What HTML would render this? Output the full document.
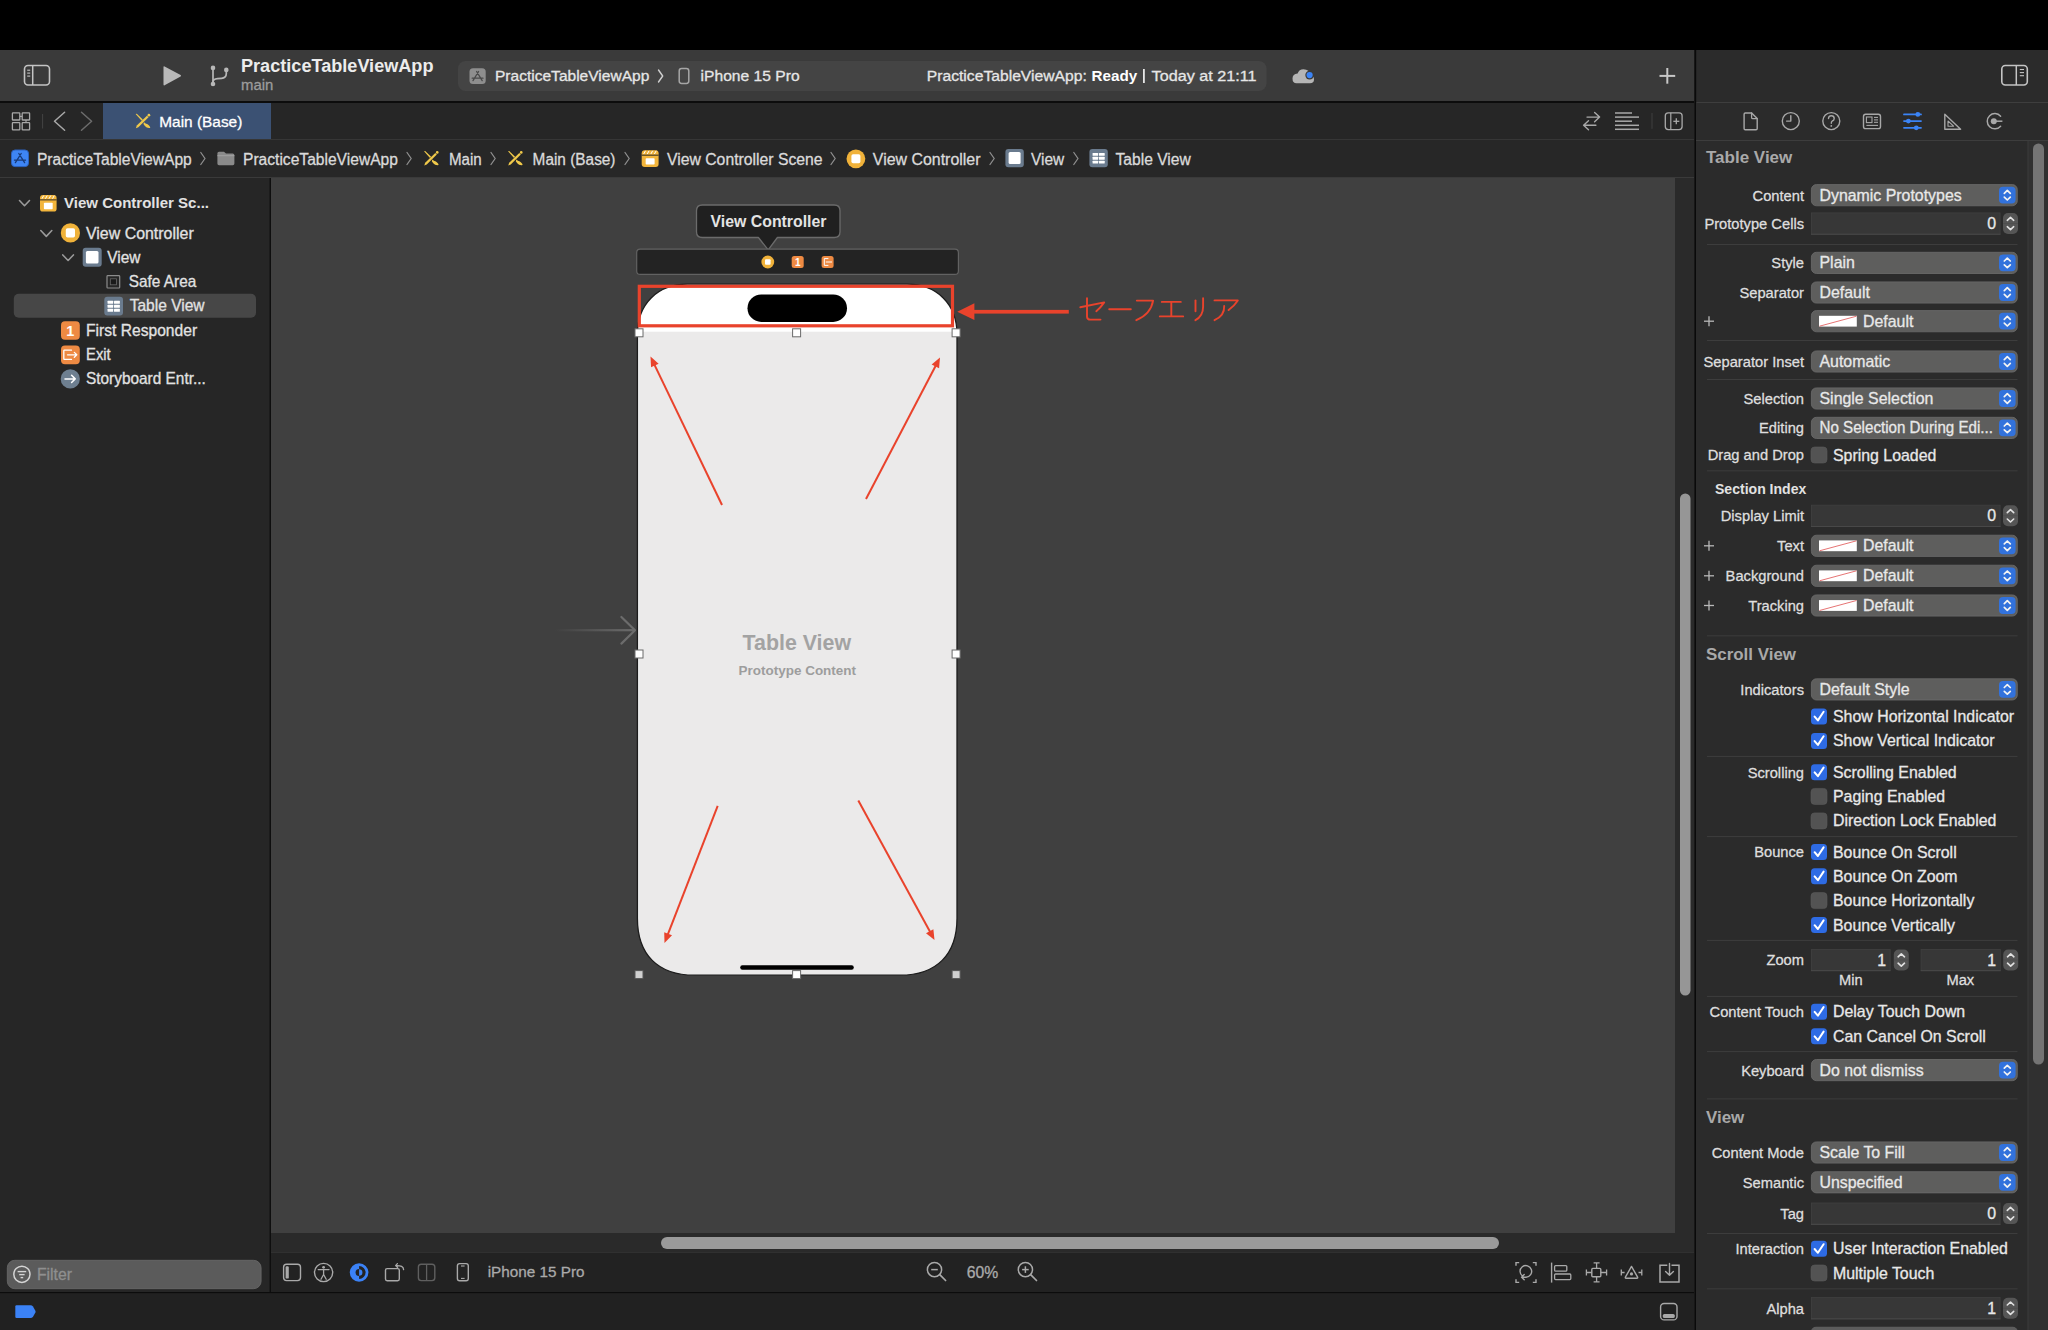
<!DOCTYPE html><html><head><meta charset="utf-8"><style>
html,body{margin:0;padding:0;background:#2b2b2b;width:2048px;height:1330px;overflow:hidden}
svg{position:absolute;left:0;top:0;display:block}
text{font-family:"Liberation Sans",sans-serif}
</style></head><body>
<svg width="2048" height="1330" viewBox="0 0 2048 1330">
<rect x="0" y="0" width="2048" height="1330" fill="#2b2b2b" />
<rect x="0" y="0" width="2048" height="50" fill="#000000" />
<rect x="0" y="50" width="1694" height="51" fill="#3a3a3a" />
<rect x="0" y="101" width="1694" height="2" fill="#0c0c0c" />
<rect x="1696" y="50" width="352" height="52" fill="#2b2b2b" />
<rect x="1696" y="102" width="352" height="1" fill="#3e3e3e" />
<rect x="0" y="103" width="1694" height="36" fill="#262626" />
<rect x="103" y="103" width="168" height="36" fill="#3b5173" />
<rect x="0" y="139" width="1694" height="1.2" fill="#363636" />
<rect x="0" y="140" width="1694" height="37" fill="#272727" />
<rect x="0" y="177" width="1694" height="1.2" fill="#3a3a3a" />
<rect x="0" y="178" width="270" height="1114" fill="#262626" />
<rect x="269.6" y="178" width="1.5" height="1114" fill="#0e0e0e" />
<rect x="271" y="178" width="1404" height="1055" fill="#404040" />
<rect x="1675" y="178" width="19" height="1055" fill="#2a2a2a" />
<rect x="1680" y="493.5" width="10.5" height="502" fill="#969696" rx="5.2" />
<rect x="271" y="1233" width="1423" height="19" fill="#2a2a2a" />
<rect x="661" y="1237" width="838" height="12" fill="#9a9a9a" rx="6" />
<rect x="271" y="1252" width="1423" height="40" fill="#222222" />
<rect x="271" y="1252" width="1423" height="1" fill="#303030" />
<rect x="0" y="1292" width="1694" height="1.5" fill="#0c0c0c" />
<rect x="0" y="1293.5" width="1694" height="37" fill="#212121" />
<rect x="1694.4" y="50" width="1.8" height="1280" fill="#0a0a0a" />
<rect x="1696" y="103" width="352" height="1227" fill="#2b2b2b" />
<rect x="1696" y="140" width="352" height="1" fill="#3d3d3d" />
<rect x="2027.5" y="141" width="20.5" height="1189" fill="#303030" />
<rect x="2027.5" y="141" width="1" height="1189" fill="#3a3a3a" />
<rect x="2033" y="143.5" width="11" height="921" fill="#747474" rx="5.5" />
<rect x="24.5" y="65.5" width="25" height="19.5" fill="none" rx="3.5" stroke="#c4c4c4" stroke-width="1.6" />
<line x1="32.7" y1="65.5" x2="32.7" y2="85" stroke="#c4c4c4" stroke-width="1.5" stroke-linecap="butt" />
<line x1="27.2" y1="70.2" x2="30.2" y2="70.2" stroke="#c4c4c4" stroke-width="1.1" stroke-linecap="butt" />
<line x1="27.2" y1="73.1" x2="30.2" y2="73.1" stroke="#c4c4c4" stroke-width="1.1" stroke-linecap="butt" />
<line x1="27.2" y1="76.1" x2="30.2" y2="76.1" stroke="#c4c4c4" stroke-width="1.1" stroke-linecap="butt" />
<path d="M163.5 67 L163.5 84.6 Q163.5 85.8 164.6 85.2 L180.6 76.5 Q181.5 75.8 180.6 75.1 L164.6 66.4 Q163.5 65.8 163.5 67 Z" fill="#b9b9b9" />
<circle cx="213" cy="67.9" r="2.3" fill="#b8b8b8"/>
<circle cx="213" cy="84" r="2.3" fill="#b8b8b8"/>
<circle cx="226.3" cy="69.9" r="2.3" fill="#b8b8b8"/>
<line x1="213" y1="67.9" x2="213" y2="84" stroke="#b8b8b8" stroke-width="1.7" stroke-linecap="butt" />
<path d="M226.3 69.9 L226.3 73.5 Q226.3 78 221.5 78.3 L217.5 78.6 Q213 79 213 82" fill="none" stroke="#b8b8b8" stroke-width="1.7" stroke-linecap="round" stroke-linejoin="round" />
<text x="241" y="71.6" font-size="18" fill="#ececec" font-weight="700" textLength="192.5" lengthAdjust="spacingAndGlyphs" >PracticeTableViewApp</text>
<text x="241" y="90.3" font-size="14.9" fill="#9c9c9c" textLength="32.3" lengthAdjust="spacingAndGlyphs" stroke="#9c9c9c" stroke-width="0.3" >main</text>
<rect x="458" y="61" width="808.5" height="30" fill="#444444" rx="7.5" />
<rect x="469.5" y="68.3" width="16.2" height="15.6" fill="#8e8e8e" rx="3.5" />
<path d="M476.6 71.5 L482.2 80.6 M478.6 71.5 L473 80.6 M472.2 78.2 L483 78.2" fill="none" stroke="#4a4a4a" stroke-width="1.3" stroke-linecap="round" stroke-linejoin="round" />
<text x="495" y="81" font-size="15.5" fill="#e6e6e6" textLength="154.3" lengthAdjust="spacingAndGlyphs" stroke="#e6e6e6" stroke-width="0.3" >PracticeTableViewApp</text>
<path d="M658.5 70.0 L662.7 76 L658.5 82.0" fill="none" stroke="#cfcfcf" stroke-width="1.4" stroke-linecap="round" stroke-linejoin="round" />
<rect x="679.2" y="68.6" width="9.6" height="14.9" fill="none" rx="2.4" stroke="#a6a6a6" stroke-width="1.5" />
<text x="700.6" y="81" font-size="15.5" fill="#e6e6e6" textLength="99" lengthAdjust="spacingAndGlyphs" stroke="#e6e6e6" stroke-width="0.3" >iPhone 15 Pro</text>
<text x="926.8" y="81.1" font-size="15.5" fill="#e6e6e6" textLength="160" lengthAdjust="spacingAndGlyphs" stroke="#e6e6e6" stroke-width="0.3" >PracticeTableViewApp:</text>
<text x="1091.5" y="81.1" font-size="15.5" fill="#ffffff" font-weight="700" textLength="45.7" lengthAdjust="spacingAndGlyphs" >Ready</text>
<rect x="1143" y="69" width="1.8" height="14" fill="#e6e6e6" />
<text x="1151.6" y="81.1" font-size="15.5" fill="#e6e6e6" textLength="105" lengthAdjust="spacingAndGlyphs" stroke="#e6e6e6" stroke-width="0.3" >Today at 21:11</text>
<path d="M1296.5 83.3 L1310 83.3 Q1314 83.3 1314 79.5 Q1314 76 1310.5 75.6 Q1309.5 69.2 1303.5 69.2 Q1299 69.2 1297.6 73.5 Q1292.5 74 1292.5 78.5 Q1292.5 83.3 1296.5 83.3 Z" fill="#b5b5b5" />
<circle cx="1309.6" cy="75.1" r="4.3" fill="#3a3a3a"/>
<circle cx="1309.6" cy="75.1" r="3.1" fill="#3b84f6"/>
<line x1="1667.3" y1="68" x2="1667.3" y2="83.7" stroke="#c8c8c8" stroke-width="2" stroke-linecap="butt" />
<line x1="1659.5" y1="75.9" x2="1675.2" y2="75.9" stroke="#c8c8c8" stroke-width="2" stroke-linecap="butt" />
<rect x="2001.8" y="65.5" width="25.5" height="19.5" fill="none" rx="3.5" stroke="#c4c4c4" stroke-width="1.6" />
<line x1="2016.3" y1="65.5" x2="2016.3" y2="85" stroke="#c4c4c4" stroke-width="1.5" stroke-linecap="butt" />
<line x1="2019.8" y1="69.5" x2="2024" y2="69.5" stroke="#c4c4c4" stroke-width="1.1" stroke-linecap="butt" />
<line x1="2019.8" y1="72.6" x2="2024" y2="72.6" stroke="#c4c4c4" stroke-width="1.1" stroke-linecap="butt" />
<line x1="2019.8" y1="75.7" x2="2024" y2="75.7" stroke="#c4c4c4" stroke-width="1.1" stroke-linecap="butt" />
<rect x="12.4" y="112.9" width="7.4" height="7.1" fill="none" rx="0.6" stroke="#a9a9a9" stroke-width="1.3" />
<rect x="22.2" y="112.9" width="7.4" height="7.1" fill="none" rx="0.6" stroke="#a9a9a9" stroke-width="1.3" />
<rect x="12.4" y="122.7" width="7.4" height="7.1" fill="none" rx="0.6" stroke="#a9a9a9" stroke-width="1.3" />
<rect x="22.2" y="122.7" width="7.4" height="7.1" fill="none" rx="0.6" stroke="#a9a9a9" stroke-width="1.3" />
<line x1="19.8" y1="116.4" x2="22.2" y2="116.4" stroke="#a9a9a9" stroke-width="1.1" stroke-linecap="butt" />
<line x1="26" y1="120" x2="26" y2="122.7" stroke="#a9a9a9" stroke-width="1.1" stroke-linecap="butt" />
<line x1="42.6" y1="114" x2="42.6" y2="128.5" stroke="#444444" stroke-width="1" stroke-linecap="butt" />
<path d="M64.6 112.3 L54.5 121.3 L64.6 130.3" fill="none" stroke="#a8a8a8" stroke-width="1.5" stroke-linecap="round" stroke-linejoin="round" />
<path d="M81.5 112.3 L91.6 121.3 L81.5 130.3" fill="none" stroke="#6c6c6c" stroke-width="1.5" stroke-linecap="round" stroke-linejoin="round" />
<path d="M135.60 114.00 L136.78 113.71 L142.75 119.49 L141.68 120.66 Z" fill="#f0c94a" />
<path d="M144.03 122.13 L145.60 123.41 Q150.10 124.98 150.30 127.92 Q146.87 128.50 144.91 125.96 L143.44 124.00 Z" fill="#f0c94a" />
<path d="M135.89 128.21 L136.78 125.56 L146.97 115.76 L148.54 117.33 L138.34 127.33 Z" fill="#f0c94a" />
<circle cx="148.928" cy="115.176" r="1.3719999999999999" fill="#f0c94a"/>
<text x="159.3" y="126.9" font-size="15.4" fill="#ffffff" textLength="83" lengthAdjust="spacingAndGlyphs" stroke="#ffffff" stroke-width="0.3" >Main (Base)</text>
<path d="M1587 117.1 L1599.6 117.1 M1594.6 112.4 L1599.6 117.1 L1594.6 121.7" fill="none" stroke="#a9a9a9" stroke-width="1.4" stroke-linecap="round" stroke-linejoin="round" />
<path d="M1595.9 125.3 L1583.6 125.3 M1588.5 120.8 L1583.6 125.3 L1588.5 129.8" fill="none" stroke="#a9a9a9" stroke-width="1.4" stroke-linecap="round" stroke-linejoin="round" />
<line x1="1615" y1="113" x2="1632" y2="113" stroke="#a9a9a9" stroke-width="1.5" stroke-linecap="butt" />
<line x1="1615" y1="117.1" x2="1639" y2="117.1" stroke="#a9a9a9" stroke-width="1.5" stroke-linecap="butt" />
<line x1="1615" y1="121.2" x2="1632" y2="121.2" stroke="#a9a9a9" stroke-width="1.5" stroke-linecap="butt" />
<line x1="1615" y1="125.3" x2="1639" y2="125.3" stroke="#a9a9a9" stroke-width="1.5" stroke-linecap="butt" />
<line x1="1615" y1="129.3" x2="1639" y2="129.3" stroke="#a9a9a9" stroke-width="1.5" stroke-linecap="butt" />
<line x1="1652" y1="113" x2="1652" y2="128.8" stroke="#3f3f3f" stroke-width="1" stroke-linecap="butt" />
<rect x="1665.3" y="112.8" width="16.8" height="16.8" fill="none" rx="3" stroke="#a9a9a9" stroke-width="1.3" />
<line x1="1670.8" y1="112.8" x2="1670.8" y2="129.6" stroke="#a9a9a9" stroke-width="1.2" stroke-linecap="butt" />
<line x1="1676.3" y1="118.3" x2="1676.3" y2="124.3" stroke="#a9a9a9" stroke-width="1.3" stroke-linecap="butt" />
<line x1="1673.3" y1="121.3" x2="1679.3" y2="121.3" stroke="#a9a9a9" stroke-width="1.3" stroke-linecap="butt" />
<rect x="11.5" y="150" width="17" height="16.6" fill="#3e85f4" rx="3.5" stroke="#2c63c0" stroke-width="1" />
<path d="M18.8 153.5 L24.6 162.6 M21.2 153.5 L15.4 162.6 M14.5 160.2 L25.5 160.2" fill="none" stroke="#173a78" stroke-width="1.3" stroke-linecap="round" stroke-linejoin="round" />
<text x="36.9" y="165" font-size="15.6" fill="#dadada" textLength="154.9" lengthAdjust="spacingAndGlyphs" stroke="#dadada" stroke-width="0.3" >PracticeTableViewApp</text>
<path d="M200.8 152.5 L205.0 158.5 L200.8 164.5" fill="none" stroke="#8f8f8f" stroke-width="1.3" stroke-linecap="round" stroke-linejoin="round" />
<path d="M217.4 153.3 Q217.4 151.7 219 151.7 L224 151.7 L226 153.6 L232.8 153.6 Q234.4 153.6 234.4 155.2 L234.4 163.6 Q234.4 165.2 232.8 165.2 L219 165.2 Q217.4 165.2 217.4 163.6 Z" fill="#8a8a8a" />
<rect x="217.4" y="155.2" width="17" height="1" fill="#a2a2a2" />
<text x="243" y="165" font-size="15.6" fill="#dadada" textLength="154.9" lengthAdjust="spacingAndGlyphs" stroke="#dadada" stroke-width="0.3" >PracticeTableViewApp</text>
<path d="M407 152.5 L411.2 158.5 L407 164.5" fill="none" stroke="#8f8f8f" stroke-width="1.3" stroke-linecap="round" stroke-linejoin="round" />
<path d="M424.00 151.30 L425.17 151.01 L431.11 156.75 L430.03 157.92 Z" fill="#f0c94a" />
<path d="M432.37 159.38 L433.93 160.64 Q438.41 162.20 438.60 165.12 Q435.19 165.71 433.25 163.17 L431.79 161.23 Z" fill="#f0c94a" />
<path d="M424.29 165.41 L425.17 162.79 L435.29 153.05 L436.85 154.61 L426.73 164.54 Z" fill="#f0c94a" />
<circle cx="437.2373333333333" cy="152.46800000000002" r="1.3626666666666665" fill="#f0c94a"/>
<text x="449" y="165" font-size="15.6" fill="#dadada" textLength="32.8" lengthAdjust="spacingAndGlyphs" stroke="#dadada" stroke-width="0.3" >Main</text>
<path d="M491 152.5 L495.2 158.5 L491 164.5" fill="none" stroke="#8f8f8f" stroke-width="1.3" stroke-linecap="round" stroke-linejoin="round" />
<path d="M508.00 151.30 L509.17 151.01 L515.11 156.75 L514.03 157.92 Z" fill="#f0c94a" />
<path d="M516.37 159.38 L517.93 160.64 Q522.41 162.20 522.60 165.12 Q519.19 165.71 517.25 163.17 L515.79 161.23 Z" fill="#f0c94a" />
<path d="M508.29 165.41 L509.17 162.79 L519.29 153.05 L520.85 154.61 L510.73 164.54 Z" fill="#f0c94a" />
<circle cx="521.2373333333334" cy="152.46800000000002" r="1.3626666666666665" fill="#f0c94a"/>
<text x="532.6" y="165" font-size="15.6" fill="#dadada" textLength="82.9" lengthAdjust="spacingAndGlyphs" stroke="#dadada" stroke-width="0.3" >Main (Base)</text>
<path d="M625 152.5 L629.2 158.5 L625 164.5" fill="none" stroke="#8f8f8f" stroke-width="1.3" stroke-linecap="round" stroke-linejoin="round" />
<rect x="641.7" y="150.2" width="16.9" height="16.9" fill="#f2b53c" rx="2.98235294117647" />
<path d="M643.6882352941177 153.97764705882352 L645.4776470588235 150.79647058823528" fill="none" stroke="#ffffff" stroke-width="0.9941176470588234" stroke-linecap="butt" stroke-linejoin="round" />
<path d="M647.2670588235295 153.97764705882352 L649.0564705882354 150.79647058823528" fill="none" stroke="#ffffff" stroke-width="0.9941176470588234" stroke-linecap="butt" stroke-linejoin="round" />
<path d="M650.8458823529412 153.97764705882352 L652.635294117647 150.79647058823528" fill="none" stroke="#ffffff" stroke-width="0.9941176470588234" stroke-linecap="butt" stroke-linejoin="round" />
<path d="M654.424705882353 153.97764705882352 L656.2141176470589 150.79647058823528" fill="none" stroke="#ffffff" stroke-width="0.9941176470588234" stroke-linecap="butt" stroke-linejoin="round" />
<rect x="641.7" y="154.6735294117647" width="16.9" height="0.9941176470588234" fill="#2e2a24" />
<rect x="645.6764705882354" y="158.15294117647056" width="8.94705882352941" height="6.461764705882352" fill="#ffffff" rx="0.7952941176470588" />
<text x="667" y="165" font-size="15.6" fill="#dadada" textLength="155.6" lengthAdjust="spacingAndGlyphs" stroke="#dadada" stroke-width="0.3" >View Controller Scene</text>
<path d="M831 152.5 L835.2 158.5 L831 164.5" fill="none" stroke="#8f8f8f" stroke-width="1.3" stroke-linecap="round" stroke-linejoin="round" />
<circle cx="855.9" cy="158.8" r="9.4" fill="#f0b23a"/>
<rect x="851.388" y="154.288" width="9.024" height="9.024" fill="#ffffff" rx="1.692" />
<text x="872.8" y="165" font-size="15.6" fill="#dadada" textLength="107.7" lengthAdjust="spacingAndGlyphs" stroke="#dadada" stroke-width="0.3" >View Controller</text>
<path d="M990 152.5 L994.2 158.5 L990 164.5" fill="none" stroke="#8f8f8f" stroke-width="1.3" stroke-linecap="round" stroke-linejoin="round" />
<rect x="1005.4" y="148.9" width="18.4" height="18.4" fill="#6a7b8e" rx="3" />
<rect x="1008.6" y="152.1" width="11.999999999999998" height="11.999999999999998" fill="#ffffff" rx="1.5" />
<text x="1031" y="165" font-size="15.6" fill="#dadada" textLength="33.2" lengthAdjust="spacingAndGlyphs" stroke="#dadada" stroke-width="0.3" >View</text>
<path d="M1073.8 152.5 L1078.0 158.5 L1073.8 164.5" fill="none" stroke="#8f8f8f" stroke-width="1.3" stroke-linecap="round" stroke-linejoin="round" />
<rect x="1089.4" y="148.9" width="18.4" height="18.4" fill="#6a7b8e" rx="3" />
<rect x="1092.5827027027028" y="152.8783783783784" width="5.569729729729729" height="2.884324324324324" fill="#ffffff" rx="0.5" />
<rect x="1098.9481081081083" y="152.8783783783784" width="5.768648648648648" height="2.884324324324324" fill="#ffffff" rx="0.5" />
<rect x="1092.5827027027028" y="156.7572972972973" width="5.569729729729729" height="2.884324324324324" fill="#ffffff" rx="0.5" />
<rect x="1098.9481081081083" y="156.7572972972973" width="5.768648648648648" height="2.884324324324324" fill="#ffffff" rx="0.5" />
<rect x="1092.5827027027028" y="160.6362162162162" width="5.569729729729729" height="2.884324324324324" fill="#ffffff" rx="0.5" />
<rect x="1098.9481081081083" y="160.6362162162162" width="5.768648648648648" height="2.884324324324324" fill="#ffffff" rx="0.5" />
<text x="1115.5" y="165" font-size="15.6" fill="#dadada" textLength="75.2" lengthAdjust="spacingAndGlyphs" stroke="#dadada" stroke-width="0.3" >Table View</text>
<path d="M19.5 200.5 L24.5 205.75 L29.5 200.5" fill="none" stroke="#9a9a9a" stroke-width="1.6" stroke-linecap="round" stroke-linejoin="round" />
<rect x="40" y="195" width="16.6" height="16.6" fill="#f2b53c" rx="2.9294117647058826" />
<path d="M41.95294117647059 198.71058823529413 L43.71058823529412 195.58588235294118" fill="none" stroke="#ffffff" stroke-width="0.9764705882352942" stroke-linecap="butt" stroke-linejoin="round" />
<path d="M45.46823529411765 198.71058823529413 L47.22588235294118 195.58588235294118" fill="none" stroke="#ffffff" stroke-width="0.9764705882352942" stroke-linecap="butt" stroke-linejoin="round" />
<path d="M48.98352941176471 198.71058823529413 L50.741176470588236 195.58588235294118" fill="none" stroke="#ffffff" stroke-width="0.9764705882352942" stroke-linecap="butt" stroke-linejoin="round" />
<path d="M52.498823529411766 198.71058823529413 L54.256470588235295 195.58588235294118" fill="none" stroke="#ffffff" stroke-width="0.9764705882352942" stroke-linecap="butt" stroke-linejoin="round" />
<rect x="40" y="199.39411764705883" width="16.6" height="0.9764705882352942" fill="#2e2a24" />
<rect x="43.90588235294118" y="202.81176470588235" width="8.788235294117648" height="6.347058823529412" fill="#ffffff" rx="0.7811764705882354" />
<text x="64" y="208.4" font-size="15" fill="#e2e2e2" font-weight="700" textLength="145" lengthAdjust="spacingAndGlyphs" >View Controller Sc...</text>
<path d="M40.8 230.55 L46.3 236.32500000000002 L51.8 230.55" fill="none" stroke="#9a9a9a" stroke-width="1.6" stroke-linecap="round" stroke-linejoin="round" />
<circle cx="70.4" cy="232.9" r="9.6" fill="#f0b23a"/>
<rect x="65.792" y="228.292" width="9.216" height="9.216" fill="#ffffff" rx="1.728" />
<text x="86" y="238.6" font-size="15.9" fill="#e2e2e2" textLength="107.7" lengthAdjust="spacingAndGlyphs" stroke="#e2e2e2" stroke-width="0.3" >View Controller</text>
<path d="M62.8 254.95000000000002 L68.1 260.51500000000004 L73.4 254.95000000000002" fill="none" stroke="#9a9a9a" stroke-width="1.6" stroke-linecap="round" stroke-linejoin="round" />
<rect x="82.7" y="247.8" width="19" height="19" fill="#6a7b8e" rx="3" />
<rect x="85.9" y="251.0" width="12.6" height="12.6" fill="#ffffff" rx="1.5" />
<text x="107.2" y="262.9" font-size="15.9" fill="#e2e2e2" textLength="33.2" lengthAdjust="spacingAndGlyphs" stroke="#e2e2e2" stroke-width="0.3" >View</text>
<rect x="107" y="275.6" width="12.7" height="12.4" fill="none" rx="0.8" stroke="#8c8c8c" stroke-width="1.2" />
<rect x="110.3" y="278.8" width="6.2" height="6.0" fill="#1a1a1a" stroke="#6a6a6a" stroke-width="0.8" />
<text x="128.8" y="287.2" font-size="15.9" fill="#e2e2e2" textLength="67.5" lengthAdjust="spacingAndGlyphs" stroke="#e2e2e2" stroke-width="0.3" >Safe Area</text>
<rect x="13.8" y="293.8" width="242.2" height="24" fill="#474747" rx="5" />
<rect x="104.3" y="296.8" width="18.7" height="18.7" fill="#6a7b8e" rx="3" />
<rect x="107.5345945945946" y="300.84324324324325" width="5.66054054054054" height="2.931351351351351" fill="#ffffff" rx="0.5" />
<rect x="114.00378378378377" y="300.84324324324325" width="5.862702702702702" height="2.931351351351351" fill="#ffffff" rx="0.5" />
<rect x="107.5345945945946" y="304.7854054054054" width="5.66054054054054" height="2.931351351351351" fill="#ffffff" rx="0.5" />
<rect x="114.00378378378377" y="304.7854054054054" width="5.862702702702702" height="2.931351351351351" fill="#ffffff" rx="0.5" />
<rect x="107.5345945945946" y="308.7275675675676" width="5.66054054054054" height="2.931351351351351" fill="#ffffff" rx="0.5" />
<rect x="114.00378378378377" y="308.7275675675676" width="5.862702702702702" height="2.931351351351351" fill="#ffffff" rx="0.5" />
<text x="129.7" y="311.4" font-size="15.9" fill="#e2e2e2" textLength="74.9" lengthAdjust="spacingAndGlyphs" stroke="#e2e2e2" stroke-width="0.3" >Table View</text>
<rect x="61" y="321.2" width="18.8" height="18.6" fill="#ee8a43" rx="4" />
<text x="70.4" y="335.8" font-size="14.5" fill="#ffffff" font-weight="700" text-anchor="middle" >1</text>
<text x="86" y="336" font-size="15.9" fill="#e2e2e2" textLength="111.1" lengthAdjust="spacingAndGlyphs" stroke="#e2e2e2" stroke-width="0.3" >First Responder</text>
<rect x="61" y="345.4" width="18.8" height="18.8" fill="#ee8a43" rx="4" />
<path d="M71.5 350.2 L64.4 350.2 Q63.8 350.2 63.8 350.8 L63.8 358.8 Q63.8 359.4 64.4 359.4 L71.5 359.4" fill="none" stroke="#ffffff" stroke-width="1.3" stroke-linecap="round" stroke-linejoin="round" />
<path d="M67.5 354.8 L76.8 354.8 M74.3 352.4 L76.8 354.8 L74.3 357.2" fill="none" stroke="#ffffff" stroke-width="1.3" stroke-linecap="round" stroke-linejoin="round" />
<text x="86" y="360.2" font-size="15.9" fill="#e2e2e2" textLength="24.7" lengthAdjust="spacingAndGlyphs" stroke="#e2e2e2" stroke-width="0.3" >Exit</text>
<circle cx="70.3" cy="378.9" r="9.6" fill="#6e7f90"/>
<path d="M65 378.9 L75.2 378.9 M71.6 375.3 L75.2 378.9 L71.6 382.5" fill="none" stroke="#ffffff" stroke-width="1.5" stroke-linecap="round" stroke-linejoin="round" />
<text x="86" y="384.4" font-size="15.9" fill="#e2e2e2" textLength="119.8" lengthAdjust="spacingAndGlyphs" stroke="#e2e2e2" stroke-width="0.3" >Storyboard Entr...</text>
<rect x="7.3" y="1260.3" width="253.8" height="28.4" fill="#5b5b5b" rx="7.5" stroke="#6b6b6b" stroke-width="0.8" />
<circle cx="21.9" cy="1274.3" r="8.1" fill="none" stroke="#d4d4d4" stroke-width="1.5"/>
<line x1="17.6" y1="1271.6" x2="26.2" y2="1271.6" stroke="#d4d4d4" stroke-width="1.4" stroke-linecap="butt" />
<line x1="19.2" y1="1274.6" x2="24.6" y2="1274.6" stroke="#d4d4d4" stroke-width="1.4" stroke-linecap="butt" />
<line x1="20.6" y1="1277.6" x2="23.2" y2="1277.6" stroke="#d4d4d4" stroke-width="1.4" stroke-linecap="butt" />
<text x="36.9" y="1280.3" font-size="15.9" fill="#8f8f8f" textLength="35" lengthAdjust="spacingAndGlyphs" stroke="#8f8f8f" stroke-width="0.3" >Filter</text>
<path d="M16.5 1305.3 L30.5 1305.3 Q32 1305.3 33 1306.5 L35.4 1310.8 Q35.8 1311.6 35.4 1312.4 L33 1316.7 Q32 1317.9 30.5 1317.9 L16.5 1317.9 Q15.3 1317.9 15.3 1316.7 L15.3 1306.5 Q15.3 1305.3 16.5 1305.3 Z" fill="#3b82f6" />
<rect x="1660.6" y="1303.5" width="16.4" height="16.4" fill="none" rx="3.5" stroke="#a8a8a8" stroke-width="1.4" />
<rect x="1662.8" y="1313.9" width="12" height="4.1" fill="#a8a8a8" rx="1.6" />
<rect x="283.6" y="1264.2" width="16.9" height="16.4" fill="none" rx="3" stroke="#a9a9a9" stroke-width="1.4" />
<rect x="285.6" y="1266.2" width="3.2" height="12.4" fill="#a9a9a9" rx="1.2" />
<circle cx="323.6" cy="1272.5" r="9.1" fill="none" stroke="#a9a9a9" stroke-width="1.4"/>
<circle cx="323.6" cy="1267.3" r="1.4" fill="#a9a9a9"/>
<path d="M318.2 1269.6 L329 1269.6 M323.6 1269.6 L323.6 1274.5 M323.6 1274.5 L321 1279.3 M323.6 1274.5 L326.2 1279.3" fill="none" stroke="#a9a9a9" stroke-width="1.3" stroke-linecap="round" stroke-linejoin="round" />
<circle cx="359.1" cy="1272.5" r="9.3" fill="#3b82f6"/>
<path d="M359.1 1266 A6.5 6.5 0 0 1 359.1 1279 Z" fill="#232323" />
<path d="M359.1 1269 A3.5 3.5 0 0 0 359.1 1276 Z" fill="#232323" />
<path d="M359.1 1269.2 A3.3 3.3 0 0 1 359.1 1275.8 Z" fill="#3b82f6" />
<rect x="385.5" y="1268.6" width="13.8" height="12.1" fill="none" rx="1.6" stroke="#a9a9a9" stroke-width="1.4" />
<path d="M397.4 1263.6 L395.6 1265.6 L397.6 1267.4 M396 1265.6 Q403.4 1265.2 403.6 1269.6" fill="none" stroke="#a9a9a9" stroke-width="1.3" stroke-linecap="round" stroke-linejoin="round" />
<rect x="418.4" y="1264.2" width="16.4" height="16.4" fill="none" rx="2.8" stroke="#5f5f5f" stroke-width="1.4" />
<line x1="426.6" y1="1264.2" x2="426.6" y2="1280.6" stroke="#5f5f5f" stroke-width="1.3" stroke-linecap="butt" />
<rect x="457.4" y="1263.6" width="10.9" height="17.2" fill="none" rx="2.2" stroke="#a9a9a9" stroke-width="1.4" />
<line x1="461" y1="1266" x2="464.6" y2="1266" stroke="#a9a9a9" stroke-width="1.1" stroke-linecap="butt" />
<line x1="461" y1="1278.4" x2="464.6" y2="1278.4" stroke="#a9a9a9" stroke-width="1.1" stroke-linecap="butt" />
<text x="487.7" y="1277.3" font-size="15.5" fill="#aaaaaa" textLength="96.8" lengthAdjust="spacingAndGlyphs" stroke="#aaaaaa" stroke-width="0.3" >iPhone 15 Pro</text>
<circle cx="934.5" cy="1269.6" r="7.1" fill="none" stroke="#a9a9a9" stroke-width="1.5"/>
<line x1="940" y1="1274.9" x2="945.6" y2="1280.5" stroke="#a9a9a9" stroke-width="1.7" stroke-linecap="round" />
<line x1="931.2" y1="1269.6" x2="937.8" y2="1269.6" stroke="#a9a9a9" stroke-width="1.5" stroke-linecap="butt" />
<text x="966.7" y="1278.2" font-size="15.6" fill="#aaaaaa" textLength="31.5" lengthAdjust="spacingAndGlyphs" stroke="#aaaaaa" stroke-width="0.3" >60%</text>
<circle cx="1025.4" cy="1269.6" r="7.1" fill="none" stroke="#a9a9a9" stroke-width="1.5"/>
<line x1="1030.9" y1="1274.9" x2="1036.5" y2="1280.5" stroke="#a9a9a9" stroke-width="1.7" stroke-linecap="round" />
<line x1="1022.1" y1="1269.6" x2="1028.7" y2="1269.6" stroke="#a9a9a9" stroke-width="1.5" stroke-linecap="butt" />
<line x1="1025.4" y1="1266.3" x2="1025.4" y2="1272.9" stroke="#a9a9a9" stroke-width="1.5" stroke-linecap="butt" />
<path d="M1516 1265.8 L1516 1262.6 L1519.2 1262.6 M1532.8 1262.6 L1536 1262.6 L1536 1265.8 M1536 1279.2 L1536 1282.4 L1532.8 1282.4 M1519.2 1282.4 L1516 1282.4 L1516 1279.2" fill="none" stroke="#a9a9a9" stroke-width="1.4" stroke-linecap="butt" stroke-linejoin="miter" />
<path d="M1522.6 1276.2 A5.8 5.8 0 1 1 1526 1277.2 L1522 1277.2 M1524.2 1274.6 L1521.6 1277.2 L1524.2 1279.8" fill="none" stroke="#a9a9a9" stroke-width="1.4" stroke-linecap="round" stroke-linejoin="round" />
<line x1="1551.6" y1="1262.6" x2="1551.6" y2="1282.6" stroke="#a9a9a9" stroke-width="1.4" stroke-linecap="butt" />
<rect x="1554.6" y="1265.6" width="12.2" height="5.6" fill="none" rx="1" stroke="#a9a9a9" stroke-width="1.3" />
<rect x="1554.6" y="1274" width="16.2" height="5.6" fill="none" rx="1" stroke="#a9a9a9" stroke-width="1.3" />
<rect x="1591.8" y="1268.4" width="9" height="8.4" fill="none" rx="1" stroke="#a9a9a9" stroke-width="1.4" />
<path d="M1593.6 1262.8 L1599.6 1262.8 M1596.6 1262.8 L1596.6 1268.4 M1593.6 1281.8 L1599.6 1281.8 M1596.6 1276.8 L1596.6 1281.8 M1586.4 1269.6 L1586.4 1275.4 M1586.4 1272.5 L1591.8 1272.5 M1606.6 1269.6 L1606.6 1275.4 M1600.8 1272.5 L1606.6 1272.5" fill="none" stroke="#a9a9a9" stroke-width="1.3" stroke-linecap="butt" stroke-linejoin="round" />
<path d="M1631.5 1266.4 L1637.6 1277.2 Q1638 1278.2 1637 1278.2 L1626 1278.2 Q1625 1278.2 1625.4 1277.2 Z" fill="none" stroke="#a9a9a9" stroke-width="1.4" stroke-linecap="round" stroke-linejoin="round" />
<circle cx="1631.5" cy="1273.9" r="1.6" fill="#a9a9a9"/>
<path d="M1621.3 1269.6 L1621.3 1275.4 M1621.3 1272.5 L1624.6 1272.5 M1641.8 1269.6 L1641.8 1275.4 M1638.5 1272.5 L1641.8 1272.5" fill="none" stroke="#a9a9a9" stroke-width="1.3" stroke-linecap="butt" stroke-linejoin="round" />
<path d="M1667.3 1265.3 L1660 1265.3 L1660 1282 L1679 1282 L1679 1265.3 L1671.5 1265.3" fill="none" stroke="#a9a9a9" stroke-width="1.5" stroke-linecap="butt" stroke-linejoin="miter" />
<path d="M1669.5 1263.4 L1669.5 1275.2 M1665.6 1271.4 L1669.5 1275.2 L1673.4 1271.4" fill="none" stroke="#a9a9a9" stroke-width="1.4" stroke-linecap="round" stroke-linejoin="round" />
<defs><linearGradient id="entry" x1="0" x2="1" y1="0" y2="0"><stop offset="0" stop-color="#404040"/><stop offset="1" stop-color="#6c6c6c"/></linearGradient><clipPath id="dev"><rect x="638.5" y="284.2" width="318.2" height="691" rx="49" ry="49"/></clipPath></defs>
<rect x="555" y="629.1" width="80" height="2.2" fill="url(#entry)" />
<path d="M621.4 617 L635 630.2 L621.4 643.6" fill="none" stroke="#6c6c6c" stroke-width="2.2" stroke-linecap="round" stroke-linejoin="round" />
<path d="M702.3 205 L834.2 205 Q840 205 840 210.8 L840 231.7 Q840 237.5 834.2 237.5 L777.4 237.5 L768.2 249.9 L758.4 237.5 L702.3 237.5 Q696.5 237.5 696.5 231.7 L696.5 210.8 Q696.5 205 702.3 205 Z" fill="#202020" stroke="#6b6b6b" stroke-width="1.3" stroke-linecap="round" stroke-linejoin="round" />
<text x="710.5" y="227" font-size="15.85" fill="#e4e4e4" font-weight="700" textLength="116" lengthAdjust="spacingAndGlyphs" >View Controller</text>
<rect x="636.7" y="249.2" width="321.7" height="25.2" fill="#232323" rx="3.5" stroke="#626262" stroke-width="1.2" />
<circle cx="767.8" cy="262" r="6.4" fill="#f0b23a"/>
<rect x="765" y="259.2" width="5.6" height="5.6" fill="#ffffff" rx="1" />
<rect x="791.7" y="256" width="12" height="12" fill="#ee8a43" rx="2.5" />
<text x="797.7" y="266" font-size="10" fill="#ffffff" font-weight="700" text-anchor="middle" >1</text>
<rect x="821.6" y="256" width="12" height="12" fill="#ee8a43" rx="2.5" />
<path d="M828 258.6 L824.3 258.6 L824.3 265.4 L828 265.4 M826.2 262 L831.6 262" fill="none" stroke="#ffffff" stroke-width="1" stroke-linecap="round" stroke-linejoin="round" />
<clipPath id="dev2"><path d="M687.4 284.2 L907 284.2 C937.0 284.2 957 304.2 957 334.2 L957 918.2 C957 954.6800000000001 936.48 975.2 900 975.2 L694.4 975.2 C657.92 975.2 637.4 954.6800000000001 637.4 918.2 L637.4 334.2 C637.4 304.2 657.4 284.2 687.4 284.2 Z"/></clipPath>
<path d="M687.4 284.2 L907 284.2 C937.0 284.2 957 304.2 957 334.2 L957 918.2 C957 954.6800000000001 936.48 975.2 900 975.2 L694.4 975.2 C657.92 975.2 637.4 954.6800000000001 637.4 918.2 L637.4 334.2 C637.4 304.2 657.4 284.2 687.4 284.2 Z" fill="#ebeaea" />
<rect x="637.8" y="284.2" width="319.2" height="47.5" fill="#ffffff" clip-path="url(#dev2)"/>
<path d="M687.4 284.2 L907 284.2 C937.0 284.2 957 304.2 957 334.2 L957 918.2 C957 954.6800000000001 936.48 975.2 900 975.2 L694.4 975.2 C657.92 975.2 637.4 954.6800000000001 637.4 918.2 L637.4 334.2 C637.4 304.2 657.4 284.2 687.4 284.2 Z" fill="none" stroke="#1c1c1c" stroke-width="1.3" stroke-linecap="round" stroke-linejoin="round" />
<rect x="747.5" y="294.4" width="99.5" height="27.5" fill="#000000" rx="13.75" />
<rect x="740.2" y="965.3" width="113.6" height="4.4" fill="#000000" rx="2.2" />
<text x="796.8" y="650" font-size="21.4" fill="#a3a3a3" font-weight="700" text-anchor="middle" textLength="108.5" lengthAdjust="spacingAndGlyphs" >Table View</text>
<text x="797.3" y="675" font-size="13.5" fill="#9d9d9d" font-weight="700" text-anchor="middle" textLength="117.5" lengthAdjust="spacingAndGlyphs" >Prototype Content</text>
<rect x="639.3" y="286.3" width="313.2" height="39.5" fill="none" stroke="#e9432c" stroke-width="3.2" />
<rect x="635" y="328.8" width="8" height="8" fill="#ffffff" stroke="#6a6a6a" stroke-width="1" />
<rect x="792.6" y="328.8" width="8" height="8" fill="#ffffff" stroke="#6a6a6a" stroke-width="1" />
<rect x="952.1" y="328.8" width="8" height="8" fill="#ffffff" stroke="#6a6a6a" stroke-width="1" />
<rect x="635" y="650" width="8" height="8" fill="#ffffff" stroke="#6a6a6a" stroke-width="1" />
<rect x="952.1" y="650" width="8" height="8" fill="#ffffff" stroke="#6a6a6a" stroke-width="1" />
<rect x="792.6" y="970.6" width="8" height="8" fill="#ffffff" stroke="#6a6a6a" stroke-width="1" />
<rect x="635" y="970.6" width="8" height="8" fill="#d0d0d0" stroke="#555555" stroke-width="1" />
<rect x="952.1" y="970.6" width="8" height="8" fill="#d0d0d0" stroke="#555555" stroke-width="1" />
<line x1="722" y1="505" x2="654.4043405689562" y2="364.6090150278319" stroke="#e9432c" stroke-width="2" stroke-linecap="butt" />
<path d="M650.50 356.50 L658.62 363.69 L651.05 367.33 Z" fill="#e9432c" />
<line x1="866" y1="499" x2="935.8292031033377" y2="365.47524001186116" stroke="#e9432c" stroke-width="2" stroke-linecap="butt" />
<path d="M940.00 357.50 L939.09 368.31 L931.64 364.42 Z" fill="#e9432c" />
<line x1="717.7" y1="805.9" x2="667.7558134717399" y2="934.6095483651213" stroke="#e9432c" stroke-width="2" stroke-linecap="butt" />
<path d="M664.50 943.00 L664.20 932.16 L672.03 935.20 Z" fill="#e9432c" />
<line x1="858.3" y1="800.6" x2="930.1831880552862" y2="932.1028400906417" stroke="#e9432c" stroke-width="2" stroke-linecap="butt" />
<path d="M934.50 940.00 L926.02 933.24 L933.39 929.21 Z" fill="#e9432c" />
<rect x="973" y="309.9" width="95.8" height="3.7" fill="#e9432c" />
<path d="M957.3 311.7 L974.4 303.3 L974.4 320.1 Z" fill="#e9432c" />
<path d="M1080.3 307.3 L1104.2 302.4 Q1100.5 307.8 1096.3 311.2" fill="none" stroke="#e9432c" stroke-width="1.9" stroke-linecap="round" stroke-linejoin="round" />
<path d="M1087 298.3 L1087 316.4 Q1087 319.6 1090.5 319.6 L1100.5 319.6" fill="none" stroke="#e9432c" stroke-width="1.9" stroke-linecap="round" stroke-linejoin="round" />
<path d="M1109.2 309.3 L1130.8 309.3" fill="none" stroke="#e9432c" stroke-width="1.9" stroke-linecap="round" stroke-linejoin="round" />
<path d="M1136.8 300.6 L1153.1 300.6 Q1150.8 314 1136.3 320.2" fill="none" stroke="#e9432c" stroke-width="1.9" stroke-linecap="round" stroke-linejoin="round" />
<path d="M1161.8 301.9 L1180.8 301.9 M1171.3 301.9 L1171.3 316.4 M1159.8 316.4 L1183.2 316.4" fill="none" stroke="#e9432c" stroke-width="1.9" stroke-linecap="round" stroke-linejoin="round" />
<path d="M1195.5 300.4 L1195.5 311.2" fill="none" stroke="#e9432c" stroke-width="1.9" stroke-linecap="round" stroke-linejoin="round" />
<path d="M1203.1 298.2 L1203.1 306.8 Q1203.1 316.2 1195.4 320.2" fill="none" stroke="#e9432c" stroke-width="1.9" stroke-linecap="round" stroke-linejoin="round" />
<path d="M1214.5 300.4 L1237.8 300.4 Q1234 306.2 1228.6 310.1" fill="none" stroke="#e9432c" stroke-width="1.9" stroke-linecap="round" stroke-linejoin="round" />
<path d="M1224.2 306 Q1224.6 315.8 1214.5 320.2" fill="none" stroke="#e9432c" stroke-width="1.9" stroke-linecap="round" stroke-linejoin="round" />
<path d="M1745.3 113 L1751.6 113 L1757.2 118.6 L1757.2 128.6 Q1757.2 129.8 1756 129.8 L1745.3 129.8 Q1744.1 129.8 1744.1 128.6 L1744.1 114.2 Q1744.1 113 1745.3 113 Z" fill="none" stroke="#a8a8a8" stroke-width="1.4" stroke-linecap="round" stroke-linejoin="round" />
<path d="M1751.6 113 L1751.6 117.4 Q1751.6 118.6 1752.8 118.6 L1757.2 118.6" fill="none" stroke="#a8a8a8" stroke-width="1.3" stroke-linecap="round" stroke-linejoin="round" />
<circle cx="1790.8" cy="121.1" r="8.5" fill="none" stroke="#a8a8a8" stroke-width="1.4"/>
<path d="M1790.8 115.6 L1790.8 121.1 L1786.6 121.1" fill="none" stroke="#a8a8a8" stroke-width="1.4" stroke-linecap="round" stroke-linejoin="round" />
<circle cx="1831.3" cy="121.1" r="8.5" fill="none" stroke="#a8a8a8" stroke-width="1.4"/>
<path d="M1828.5 118.6 Q1828.5 115.7 1831.3 115.7 Q1834.2 115.7 1834.2 118.4 Q1834.2 120.2 1832.3 121 Q1831.3 121.6 1831.3 123.2" fill="none" stroke="#a8a8a8" stroke-width="1.4" stroke-linecap="round" stroke-linejoin="round" />
<circle cx="1831.3" cy="125.9" r="0.9" fill="#a8a8a8"/>
<rect x="1863.5" y="114.2" width="17" height="14.4" fill="none" rx="2.2" stroke="#a8a8a8" stroke-width="1.4" />
<rect x="1866.4" y="117" width="5.6" height="5.6" fill="none" stroke="#a8a8a8" stroke-width="1.1" />
<line x1="1874" y1="117.4" x2="1878" y2="117.4" stroke="#a8a8a8" stroke-width="1.1" stroke-linecap="butt" />
<line x1="1874" y1="119.9" x2="1878" y2="119.9" stroke="#a8a8a8" stroke-width="1.1" stroke-linecap="butt" />
<line x1="1874" y1="122.3" x2="1878" y2="122.3" stroke="#a8a8a8" stroke-width="1.1" stroke-linecap="butt" />
<line x1="1866.4" y1="125.4" x2="1878" y2="125.4" stroke="#a8a8a8" stroke-width="1.1" stroke-linecap="butt" />
<line x1="1904" y1="114.4" x2="1921" y2="114.4" stroke="#3b84f6" stroke-width="1.8" stroke-linecap="round" />
<circle cx="1917.8" cy="114.4" r="2.4" fill="#3b84f6"/>
<line x1="1904" y1="121.1" x2="1921" y2="121.1" stroke="#3b84f6" stroke-width="1.8" stroke-linecap="round" />
<circle cx="1908.4" cy="121.1" r="2.4" fill="#3b84f6"/>
<line x1="1904" y1="127.8" x2="1921" y2="127.8" stroke="#3b84f6" stroke-width="1.8" stroke-linecap="round" />
<circle cx="1916.3" cy="127.8" r="2.4" fill="#3b84f6"/>
<path d="M1944.8 114.2 L1944.8 129.2 L1960.6 129.2 Z" fill="none" stroke="#a8a8a8" stroke-width="1.4" stroke-linecap="round" stroke-linejoin="round" />
<path d="M1948 121 L1948 126.2 L1953.6 126.2 Z" fill="none" stroke="#a8a8a8" stroke-width="1.1" stroke-linecap="round" stroke-linejoin="round" />
<path d="M2000.6 116.2 A7.6 7.6 0 1 0 2000.6 126.2" fill="none" stroke="#a8a8a8" stroke-width="1.5" stroke-linecap="round" stroke-linejoin="round" />
<circle cx="1993.8" cy="121.2" r="3" fill="#a8a8a8"/>
<line x1="1993.8" y1="121.2" x2="2002.4" y2="121.2" stroke="#a8a8a8" stroke-width="1.5" stroke-linecap="butt" />
<text x="1706" y="162.9" font-size="17" fill="#a9a9a9" font-weight="700" textLength="86.3" lengthAdjust="spacingAndGlyphs" >Table View</text>
<text x="1804" y="200.6" font-size="14.7" fill="#dedede" text-anchor="end" stroke="#dedede" stroke-width="0.3" >Content</text>
<rect x="1811.4" y="184.6" width="205.89999999999998" height="21.2" fill="#5e5e5d" rx="5" stroke="#6c6c6c" stroke-width="0.8" />
<rect x="1999" y="186.79999999999998" width="16.6" height="16.8" fill="#3272dc" rx="4" />
<path d="M2004.3 193.29999999999998 L2007.3 190.39999999999998 L2010.3 193.29999999999998 M2004.3 197.1 L2007.3 200.0 L2010.3 197.1" fill="none" stroke="#f4f4f4" stroke-width="1.7" stroke-linecap="round" stroke-linejoin="round" />
<text x="1819.5" y="200.7" font-size="15.9" fill="#e8e8e8" stroke="#e8e8e8" stroke-width="0.3" >Dynamic Prototypes</text>
<text x="1804" y="228.9" font-size="14.7" fill="#dedede" text-anchor="end" stroke="#dedede" stroke-width="0.3" >Prototype Cells</text>
<rect x="1811.4" y="212.9" width="188.7" height="21.4" fill="#373737" stroke="#404040" stroke-width="0.8" />
<rect x="1811" y="233.7" width="189.5" height="0.9" fill="#4a4a4a" />
<text x="1996.0" y="229.0" font-size="15.9" fill="#e8e8e8" text-anchor="end" stroke="#e8e8e8" stroke-width="0.3" >0</text>
<rect x="2003" y="213.0" width="15" height="21" fill="#555555" rx="5" />
<rect x="2003" y="223.2" width="15" height="0.6" fill="#4a4a4a" />
<path d="M2007.3 220.3 L2010.5 217.3 L2013.7 220.3 M2007.3 226.7 L2010.5 229.7 L2013.7 226.7" fill="none" stroke="#e2e2e2" stroke-width="1.6" stroke-linecap="round" stroke-linejoin="round" />
<rect x="1707" y="244.0" width="310.5" height="1" fill="#3d3d3d" />
<text x="1804" y="268.29999999999995" font-size="14.7" fill="#dedede" text-anchor="end" stroke="#dedede" stroke-width="0.3" >Style</text>
<rect x="1811.4" y="252.29999999999998" width="205.89999999999998" height="21.2" fill="#5e5e5d" rx="5" stroke="#6c6c6c" stroke-width="0.8" />
<rect x="1999" y="254.49999999999997" width="16.6" height="16.8" fill="#3272dc" rx="4" />
<path d="M2004.3 261.0 L2007.3 258.09999999999997 L2010.3 261.0 M2004.3 264.79999999999995 L2007.3 267.7 L2010.3 264.79999999999995" fill="none" stroke="#f4f4f4" stroke-width="1.7" stroke-linecap="round" stroke-linejoin="round" />
<text x="1819.5" y="268.4" font-size="15.9" fill="#e8e8e8" stroke="#e8e8e8" stroke-width="0.3" >Plain</text>
<text x="1804" y="297.9" font-size="14.7" fill="#dedede" text-anchor="end" stroke="#dedede" stroke-width="0.3" >Separator</text>
<rect x="1811.4" y="281.9" width="205.89999999999998" height="21.2" fill="#5e5e5d" rx="5" stroke="#6c6c6c" stroke-width="0.8" />
<rect x="1999" y="284.1" width="16.6" height="16.8" fill="#3272dc" rx="4" />
<path d="M2004.3 290.6 L2007.3 287.7 L2010.3 290.6 M2004.3 294.4 L2007.3 297.3 L2010.3 294.4" fill="none" stroke="#f4f4f4" stroke-width="1.7" stroke-linecap="round" stroke-linejoin="round" />
<text x="1819.5" y="298.0" font-size="15.9" fill="#e8e8e8" stroke="#e8e8e8" stroke-width="0.3" >Default</text>
<line x1="1704" y1="321.2" x2="1714" y2="321.2" stroke="#b8b8b8" stroke-width="1.3" stroke-linecap="butt" />
<line x1="1709" y1="316.2" x2="1709" y2="326.2" stroke="#b8b8b8" stroke-width="1.3" stroke-linecap="butt" />
<rect x="1811.4" y="310.59999999999997" width="205.89999999999998" height="21.2" fill="#5e5e5d" rx="5" stroke="#6c6c6c" stroke-width="0.8" />
<rect x="1999" y="312.8" width="16.6" height="16.8" fill="#3272dc" rx="4" />
<path d="M2004.3 319.3 L2007.3 316.4 L2010.3 319.3 M2004.3 323.09999999999997 L2007.3 326.0 L2010.3 323.09999999999997" fill="none" stroke="#f4f4f4" stroke-width="1.7" stroke-linecap="round" stroke-linejoin="round" />
<rect x="1819" y="315.8" width="37.8" height="10.8" fill="#ffffff" />
<line x1="1819.5" y1="326.2" x2="1856.5" y2="316.2" stroke="#e05050" stroke-width="0.8" stroke-linecap="butt" />
<text x="1863" y="326.7" font-size="15.9" fill="#e8e8e8" stroke="#e8e8e8" stroke-width="0.3" >Default</text>
<rect x="1707" y="340.0" width="310.5" height="1" fill="#3d3d3d" />
<text x="1804" y="366.9" font-size="14.7" fill="#dedede" text-anchor="end" stroke="#dedede" stroke-width="0.3" >Separator Inset</text>
<rect x="1811.4" y="350.9" width="205.89999999999998" height="21.2" fill="#5e5e5d" rx="5" stroke="#6c6c6c" stroke-width="0.8" />
<rect x="1999" y="353.1" width="16.6" height="16.8" fill="#3272dc" rx="4" />
<path d="M2004.3 359.6 L2007.3 356.7 L2010.3 359.6 M2004.3 363.4 L2007.3 366.3 L2010.3 363.4" fill="none" stroke="#f4f4f4" stroke-width="1.7" stroke-linecap="round" stroke-linejoin="round" />
<text x="1819.5" y="367.0" font-size="15.9" fill="#e8e8e8" stroke="#e8e8e8" stroke-width="0.3" >Automatic</text>
<rect x="1707" y="379.0" width="310.5" height="1" fill="#3d3d3d" />
<text x="1804" y="403.9" font-size="14.7" fill="#dedede" text-anchor="end" stroke="#dedede" stroke-width="0.3" >Selection</text>
<rect x="1811.4" y="387.9" width="205.89999999999998" height="21.2" fill="#5e5e5d" rx="5" stroke="#6c6c6c" stroke-width="0.8" />
<rect x="1999" y="390.1" width="16.6" height="16.8" fill="#3272dc" rx="4" />
<path d="M2004.3 396.6 L2007.3 393.7 L2010.3 396.6 M2004.3 400.4 L2007.3 403.3 L2010.3 400.4" fill="none" stroke="#f4f4f4" stroke-width="1.7" stroke-linecap="round" stroke-linejoin="round" />
<text x="1819.5" y="404.0" font-size="15.9" fill="#e8e8e8" stroke="#e8e8e8" stroke-width="0.3" >Single Selection</text>
<text x="1804" y="433.29999999999995" font-size="14.7" fill="#dedede" text-anchor="end" stroke="#dedede" stroke-width="0.3" >Editing</text>
<rect x="1811.4" y="417.29999999999995" width="205.89999999999998" height="21.2" fill="#5e5e5d" rx="5" stroke="#6c6c6c" stroke-width="0.8" />
<rect x="1999" y="419.5" width="16.6" height="16.8" fill="#3272dc" rx="4" />
<path d="M2004.3 426.0 L2007.3 423.09999999999997 L2010.3 426.0 M2004.3 429.79999999999995 L2007.3 432.7 L2010.3 429.79999999999995" fill="none" stroke="#f4f4f4" stroke-width="1.7" stroke-linecap="round" stroke-linejoin="round" />
<text x="1819.5" y="433.4" font-size="15.9" fill="#e8e8e8" textLength="173.5" lengthAdjust="spacingAndGlyphs" stroke="#e8e8e8" stroke-width="0.3" >No Selection During Edi...</text>
<text x="1804" y="460.4" font-size="14.7" fill="#dedede" text-anchor="end" stroke="#dedede" stroke-width="0.3" >Drag and Drop</text>
<rect x="1811" y="447" width="16" height="16" fill="#535353" rx="3.5" stroke="#5a5a5a" stroke-width="0.6" />
<text x="1833" y="460.5" font-size="15.9" fill="#e8e8e8" stroke="#e8e8e8" stroke-width="0.3" >Spring Loaded</text>
<rect x="1707" y="470.3" width="310.5" height="1" fill="#3d3d3d" />
<text x="1715" y="493.7" font-size="14" fill="#e2e2e2" font-weight="700" textLength="91.3" lengthAdjust="spacingAndGlyphs" >Section Index</text>
<text x="1804" y="521.1999999999999" font-size="14.7" fill="#dedede" text-anchor="end" stroke="#dedede" stroke-width="0.3" >Display Limit</text>
<rect x="1811.4" y="505.19999999999993" width="188.7" height="21.4" fill="#373737" stroke="#404040" stroke-width="0.8" />
<rect x="1811" y="526.0" width="189.5" height="0.9" fill="#4a4a4a" />
<text x="1996.0" y="521.3" font-size="15.9" fill="#e8e8e8" text-anchor="end" stroke="#e8e8e8" stroke-width="0.3" >0</text>
<rect x="2003" y="505.29999999999995" width="15" height="21" fill="#555555" rx="5" />
<rect x="2003" y="515.5" width="15" height="0.6" fill="#4a4a4a" />
<path d="M2007.3 512.5999999999999 L2010.5 509.59999999999997 L2013.7 512.5999999999999 M2007.3 519.0 L2010.5 522.0 L2013.7 519.0" fill="none" stroke="#e2e2e2" stroke-width="1.6" stroke-linecap="round" stroke-linejoin="round" />
<line x1="1704" y1="545.8" x2="1714" y2="545.8" stroke="#b8b8b8" stroke-width="1.3" stroke-linecap="butt" />
<line x1="1709" y1="540.8" x2="1709" y2="550.8" stroke="#b8b8b8" stroke-width="1.3" stroke-linecap="butt" />
<text x="1804" y="551.1999999999999" font-size="14.7" fill="#dedede" text-anchor="end" stroke="#dedede" stroke-width="0.3" >Text</text>
<rect x="1811.4" y="535.1999999999999" width="205.89999999999998" height="21.2" fill="#5e5e5d" rx="5" stroke="#6c6c6c" stroke-width="0.8" />
<rect x="1999" y="537.4" width="16.6" height="16.8" fill="#3272dc" rx="4" />
<path d="M2004.3 543.9 L2007.3 541.0 L2010.3 543.9 M2004.3 547.6999999999999 L2007.3 550.5999999999999 L2010.3 547.6999999999999" fill="none" stroke="#f4f4f4" stroke-width="1.7" stroke-linecap="round" stroke-linejoin="round" />
<rect x="1819" y="540.4" width="37.8" height="10.8" fill="#ffffff" />
<line x1="1819.5" y1="550.8" x2="1856.5" y2="540.8" stroke="#e05050" stroke-width="0.8" stroke-linecap="butt" />
<text x="1863" y="551.3" font-size="15.9" fill="#e8e8e8" stroke="#e8e8e8" stroke-width="0.3" >Default</text>
<line x1="1704" y1="575.8" x2="1714" y2="575.8" stroke="#b8b8b8" stroke-width="1.3" stroke-linecap="butt" />
<line x1="1709" y1="570.8" x2="1709" y2="580.8" stroke="#b8b8b8" stroke-width="1.3" stroke-linecap="butt" />
<text x="1804" y="581.1999999999999" font-size="14.7" fill="#dedede" text-anchor="end" stroke="#dedede" stroke-width="0.3" >Background</text>
<rect x="1811.4" y="565.1999999999999" width="205.89999999999998" height="21.2" fill="#5e5e5d" rx="5" stroke="#6c6c6c" stroke-width="0.8" />
<rect x="1999" y="567.4" width="16.6" height="16.8" fill="#3272dc" rx="4" />
<path d="M2004.3 573.9 L2007.3 571.0 L2010.3 573.9 M2004.3 577.6999999999999 L2007.3 580.5999999999999 L2010.3 577.6999999999999" fill="none" stroke="#f4f4f4" stroke-width="1.7" stroke-linecap="round" stroke-linejoin="round" />
<rect x="1819" y="570.4" width="37.8" height="10.8" fill="#ffffff" />
<line x1="1819.5" y1="580.8" x2="1856.5" y2="570.8" stroke="#e05050" stroke-width="0.8" stroke-linecap="butt" />
<text x="1863" y="581.3" font-size="15.9" fill="#e8e8e8" stroke="#e8e8e8" stroke-width="0.3" >Default</text>
<line x1="1704" y1="605.5" x2="1714" y2="605.5" stroke="#b8b8b8" stroke-width="1.3" stroke-linecap="butt" />
<line x1="1709" y1="600.5" x2="1709" y2="610.5" stroke="#b8b8b8" stroke-width="1.3" stroke-linecap="butt" />
<text x="1804" y="610.9" font-size="14.7" fill="#dedede" text-anchor="end" stroke="#dedede" stroke-width="0.3" >Tracking</text>
<rect x="1811.4" y="594.9" width="205.89999999999998" height="21.2" fill="#5e5e5d" rx="5" stroke="#6c6c6c" stroke-width="0.8" />
<rect x="1999" y="597.1" width="16.6" height="16.8" fill="#3272dc" rx="4" />
<path d="M2004.3 603.6 L2007.3 600.7 L2010.3 603.6 M2004.3 607.4 L2007.3 610.3 L2010.3 607.4" fill="none" stroke="#f4f4f4" stroke-width="1.7" stroke-linecap="round" stroke-linejoin="round" />
<rect x="1819" y="600.1" width="37.8" height="10.8" fill="#ffffff" />
<line x1="1819.5" y1="610.5" x2="1856.5" y2="600.5" stroke="#e05050" stroke-width="0.8" stroke-linecap="butt" />
<text x="1863" y="611.0" font-size="15.9" fill="#e8e8e8" stroke="#e8e8e8" stroke-width="0.3" >Default</text>
<rect x="1707" y="635.3" width="310.5" height="1" fill="#3d3d3d" />
<text x="1706" y="660" font-size="17" fill="#a9a9a9" font-weight="700" textLength="90" lengthAdjust="spacingAndGlyphs" >Scroll View</text>
<text x="1804" y="694.8" font-size="14.7" fill="#dedede" text-anchor="end" stroke="#dedede" stroke-width="0.3" >Indicators</text>
<rect x="1811.4" y="678.8" width="205.89999999999998" height="21.2" fill="#5e5e5d" rx="5" stroke="#6c6c6c" stroke-width="0.8" />
<rect x="1999" y="681.0" width="16.6" height="16.8" fill="#3272dc" rx="4" />
<path d="M2004.3 687.5 L2007.3 684.6 L2010.3 687.5 M2004.3 691.3 L2007.3 694.1999999999999 L2010.3 691.3" fill="none" stroke="#f4f4f4" stroke-width="1.7" stroke-linecap="round" stroke-linejoin="round" />
<text x="1819.5" y="694.9" font-size="15.9" fill="#e8e8e8" stroke="#e8e8e8" stroke-width="0.3" >Default Style</text>
<rect x="1811" y="708.4" width="16" height="16" fill="#2e6be4" rx="3.5" />
<path d="M1814.6 716.6 L1817.9 720.4 L1823.6 711.8" fill="none" stroke="#ffffff" stroke-width="2" stroke-linecap="round" stroke-linejoin="round" />
<text x="1833" y="721.9" font-size="15.9" fill="#e8e8e8" stroke="#e8e8e8" stroke-width="0.3" >Show Horizontal Indicator</text>
<rect x="1811" y="732.9" width="16" height="16" fill="#2e6be4" rx="3.5" />
<path d="M1814.6 741.1 L1817.9 744.9 L1823.6 736.3" fill="none" stroke="#ffffff" stroke-width="2" stroke-linecap="round" stroke-linejoin="round" />
<text x="1833" y="746.4" font-size="15.9" fill="#e8e8e8" stroke="#e8e8e8" stroke-width="0.3" >Show Vertical Indicator</text>
<rect x="1707" y="755.9" width="310.5" height="1" fill="#3d3d3d" />
<text x="1804" y="777.6" font-size="14.7" fill="#dedede" text-anchor="end" stroke="#dedede" stroke-width="0.3" >Scrolling</text>
<rect x="1811" y="764.2" width="16" height="16" fill="#2e6be4" rx="3.5" />
<path d="M1814.6 772.4000000000001 L1817.9 776.2 L1823.6 767.6" fill="none" stroke="#ffffff" stroke-width="2" stroke-linecap="round" stroke-linejoin="round" />
<text x="1833" y="777.7" font-size="15.9" fill="#e8e8e8" stroke="#e8e8e8" stroke-width="0.3" >Scrolling Enabled</text>
<rect x="1811" y="788.4" width="16" height="16" fill="#535353" rx="3.5" stroke="#5a5a5a" stroke-width="0.6" />
<text x="1833" y="801.9" font-size="15.9" fill="#e8e8e8" stroke="#e8e8e8" stroke-width="0.3" >Paging Enabled</text>
<rect x="1811" y="812.9" width="16" height="16" fill="#535353" rx="3.5" stroke="#5a5a5a" stroke-width="0.6" />
<text x="1833" y="826.4" font-size="15.9" fill="#e8e8e8" stroke="#e8e8e8" stroke-width="0.3" >Direction Lock Enabled</text>
<rect x="1707" y="836.1" width="310.5" height="1" fill="#3d3d3d" />
<text x="1804" y="857.4" font-size="14.7" fill="#dedede" text-anchor="end" stroke="#dedede" stroke-width="0.3" >Bounce</text>
<rect x="1811" y="844" width="16" height="16" fill="#2e6be4" rx="3.5" />
<path d="M1814.6 852.2 L1817.9 856 L1823.6 847.4" fill="none" stroke="#ffffff" stroke-width="2" stroke-linecap="round" stroke-linejoin="round" />
<text x="1833" y="857.5" font-size="15.9" fill="#e8e8e8" stroke="#e8e8e8" stroke-width="0.3" >Bounce On Scroll</text>
<rect x="1811" y="868.2" width="16" height="16" fill="#2e6be4" rx="3.5" />
<path d="M1814.6 876.4000000000001 L1817.9 880.2 L1823.6 871.6" fill="none" stroke="#ffffff" stroke-width="2" stroke-linecap="round" stroke-linejoin="round" />
<text x="1833" y="881.7" font-size="15.9" fill="#e8e8e8" stroke="#e8e8e8" stroke-width="0.3" >Bounce On Zoom</text>
<rect x="1811" y="892.6" width="16" height="16" fill="#535353" rx="3.5" stroke="#5a5a5a" stroke-width="0.6" />
<text x="1833" y="906.1" font-size="15.9" fill="#e8e8e8" stroke="#e8e8e8" stroke-width="0.3" >Bounce Horizontally</text>
<rect x="1811" y="917" width="16" height="16" fill="#2e6be4" rx="3.5" />
<path d="M1814.6 925.2 L1817.9 929 L1823.6 920.4" fill="none" stroke="#ffffff" stroke-width="2" stroke-linecap="round" stroke-linejoin="round" />
<text x="1833" y="930.5" font-size="15.9" fill="#e8e8e8" stroke="#e8e8e8" stroke-width="0.3" >Bounce Vertically</text>
<rect x="1707" y="939.9" width="310.5" height="1" fill="#3d3d3d" />
<text x="1804" y="965.4" font-size="14.7" fill="#dedede" text-anchor="end" stroke="#dedede" stroke-width="0.3" >Zoom</text>
<rect x="1811.4" y="949.4" width="78.8" height="21.4" fill="#373737" stroke="#404040" stroke-width="0.8" />
<rect x="1811" y="970.2" width="79.6" height="0.9" fill="#4a4a4a" />
<text x="1886.1" y="965.5" font-size="15.9" fill="#e8e8e8" text-anchor="end" stroke="#e8e8e8" stroke-width="0.3" >1</text>
<rect x="1893.8" y="949.5" width="15" height="21" fill="#555555" rx="5" />
<rect x="1893.8" y="959.7" width="15" height="0.6" fill="#4a4a4a" />
<path d="M1898.1 956.8 L1901.3 953.8 L1904.5 956.8 M1898.1 963.2 L1901.3 966.2 L1904.5 963.2" fill="none" stroke="#e2e2e2" stroke-width="1.6" stroke-linecap="round" stroke-linejoin="round" />
<rect x="1921.1000000000001" y="949.4" width="79.2" height="21.4" fill="#373737" stroke="#404040" stroke-width="0.8" />
<rect x="1920.7" y="970.2" width="80" height="0.9" fill="#4a4a4a" />
<text x="1996.2" y="965.5" font-size="15.9" fill="#e8e8e8" text-anchor="end" stroke="#e8e8e8" stroke-width="0.3" >1</text>
<rect x="2003.2" y="949.5" width="15" height="21" fill="#555555" rx="5" />
<rect x="2003.2" y="959.7" width="15" height="0.6" fill="#4a4a4a" />
<path d="M2007.5 956.8 L2010.7 953.8 L2013.9 956.8 M2007.5 963.2 L2010.7 966.2 L2013.9 963.2" fill="none" stroke="#e2e2e2" stroke-width="1.6" stroke-linecap="round" stroke-linejoin="round" />
<text x="1850.8" y="984.8" font-size="14.7" fill="#dedede" text-anchor="middle" stroke="#dedede" stroke-width="0.3" >Min</text>
<text x="1960.3" y="984.8" font-size="14.7" fill="#dedede" text-anchor="middle" stroke="#dedede" stroke-width="0.3" >Max</text>
<rect x="1707" y="995.9" width="310.5" height="1" fill="#3d3d3d" />
<text x="1804" y="1017.1" font-size="14.7" fill="#dedede" text-anchor="end" stroke="#dedede" stroke-width="0.3" >Content Touch</text>
<rect x="1811" y="1003.7" width="16" height="16" fill="#2e6be4" rx="3.5" />
<path d="M1814.6 1011.9000000000001 L1817.9 1015.7 L1823.6 1007.1" fill="none" stroke="#ffffff" stroke-width="2" stroke-linecap="round" stroke-linejoin="round" />
<text x="1833" y="1017.2" font-size="15.9" fill="#e8e8e8" stroke="#e8e8e8" stroke-width="0.3" >Delay Touch Down</text>
<rect x="1811" y="1028.2" width="16" height="16" fill="#2e6be4" rx="3.5" />
<path d="M1814.6 1036.4 L1817.9 1040.2 L1823.6 1031.6000000000001" fill="none" stroke="#ffffff" stroke-width="2" stroke-linecap="round" stroke-linejoin="round" />
<text x="1833" y="1041.7" font-size="15.9" fill="#e8e8e8" stroke="#e8e8e8" stroke-width="0.3" >Can Cancel On Scroll</text>
<rect x="1707" y="1051.1" width="310.5" height="1" fill="#3d3d3d" />
<text x="1804" y="1075.5" font-size="14.7" fill="#dedede" text-anchor="end" stroke="#dedede" stroke-width="0.3" >Keyboard</text>
<rect x="1811.4" y="1059.5" width="205.89999999999998" height="21.2" fill="#5e5e5d" rx="5" stroke="#6c6c6c" stroke-width="0.8" />
<rect x="1999" y="1061.6999999999998" width="16.6" height="16.8" fill="#3272dc" rx="4" />
<path d="M2004.3 1068.1999999999998 L2007.3 1065.3 L2010.3 1068.1999999999998 M2004.3 1072.0 L2007.3 1074.8999999999999 L2010.3 1072.0" fill="none" stroke="#f4f4f4" stroke-width="1.7" stroke-linecap="round" stroke-linejoin="round" />
<text x="1819.5" y="1075.6" font-size="15.9" fill="#e8e8e8" stroke="#e8e8e8" stroke-width="0.3" >Do not dismiss</text>
<rect x="1707" y="1098.4" width="310.5" height="1" fill="#3d3d3d" />
<text x="1706" y="1123" font-size="17" fill="#a9a9a9" font-weight="700" textLength="38.3" lengthAdjust="spacingAndGlyphs" >View</text>
<text x="1804" y="1157.9" font-size="14.7" fill="#dedede" text-anchor="end" stroke="#dedede" stroke-width="0.3" >Content Mode</text>
<rect x="1811.4" y="1141.9" width="205.89999999999998" height="21.2" fill="#5e5e5d" rx="5" stroke="#6c6c6c" stroke-width="0.8" />
<rect x="1999" y="1144.1" width="16.6" height="16.8" fill="#3272dc" rx="4" />
<path d="M2004.3 1150.6 L2007.3 1147.7 L2010.3 1150.6 M2004.3 1154.4 L2007.3 1157.3 L2010.3 1154.4" fill="none" stroke="#f4f4f4" stroke-width="1.7" stroke-linecap="round" stroke-linejoin="round" />
<text x="1819.5" y="1158.0" font-size="15.9" fill="#e8e8e8" stroke="#e8e8e8" stroke-width="0.3" >Scale To Fill</text>
<text x="1804" y="1187.7" font-size="14.7" fill="#dedede" text-anchor="end" stroke="#dedede" stroke-width="0.3" >Semantic</text>
<rect x="1811.4" y="1171.7" width="205.89999999999998" height="21.2" fill="#5e5e5d" rx="5" stroke="#6c6c6c" stroke-width="0.8" />
<rect x="1999" y="1173.8999999999999" width="16.6" height="16.8" fill="#3272dc" rx="4" />
<path d="M2004.3 1180.3999999999999 L2007.3 1177.5 L2010.3 1180.3999999999999 M2004.3 1184.2 L2007.3 1187.1 L2010.3 1184.2" fill="none" stroke="#f4f4f4" stroke-width="1.7" stroke-linecap="round" stroke-linejoin="round" />
<text x="1819.5" y="1187.8" font-size="15.9" fill="#e8e8e8" stroke="#e8e8e8" stroke-width="0.3" >Unspecified</text>
<text x="1804" y="1219.0" font-size="14.7" fill="#dedede" text-anchor="end" stroke="#dedede" stroke-width="0.3" >Tag</text>
<rect x="1811.4" y="1203.0" width="188.7" height="21.4" fill="#373737" stroke="#404040" stroke-width="0.8" />
<rect x="1811" y="1223.8" width="189.5" height="0.9" fill="#4a4a4a" />
<text x="1996.0" y="1219.1" font-size="15.9" fill="#e8e8e8" text-anchor="end" stroke="#e8e8e8" stroke-width="0.3" >0</text>
<rect x="2003" y="1203.1" width="15" height="21" fill="#555555" rx="5" />
<rect x="2003" y="1213.3" width="15" height="0.6" fill="#4a4a4a" />
<path d="M2007.3 1210.3999999999999 L2010.5 1207.3999999999999 L2013.7 1210.3999999999999 M2007.3 1216.8 L2010.5 1219.8 L2013.7 1216.8" fill="none" stroke="#e2e2e2" stroke-width="1.6" stroke-linecap="round" stroke-linejoin="round" />
<rect x="1707" y="1233.0" width="310.5" height="1" fill="#3d3d3d" />
<text x="1804" y="1254.2" font-size="14.7" fill="#dedede" text-anchor="end" stroke="#dedede" stroke-width="0.3" >Interaction</text>
<rect x="1811" y="1240.8" width="16" height="16" fill="#2e6be4" rx="3.5" />
<path d="M1814.6 1249.0 L1817.9 1252.8 L1823.6 1244.2" fill="none" stroke="#ffffff" stroke-width="2" stroke-linecap="round" stroke-linejoin="round" />
<text x="1833" y="1254.3" font-size="15.9" fill="#e8e8e8" stroke="#e8e8e8" stroke-width="0.3" >User Interaction Enabled</text>
<rect x="1811" y="1265" width="16" height="16" fill="#535353" rx="3.5" stroke="#5a5a5a" stroke-width="0.6" />
<text x="1833" y="1278.5" font-size="15.9" fill="#e8e8e8" stroke="#e8e8e8" stroke-width="0.3" >Multiple Touch</text>
<rect x="1707" y="1288.3" width="310.5" height="1" fill="#3d3d3d" />
<text x="1804" y="1313.6000000000001" font-size="14.7" fill="#dedede" text-anchor="end" stroke="#dedede" stroke-width="0.3" >Alpha</text>
<rect x="1811.4" y="1297.6000000000001" width="188.7" height="21.4" fill="#373737" stroke="#404040" stroke-width="0.8" />
<rect x="1811" y="1318.4" width="189.5" height="0.9" fill="#4a4a4a" />
<text x="1996.0" y="1313.7" font-size="15.9" fill="#e8e8e8" text-anchor="end" stroke="#e8e8e8" stroke-width="0.3" >1</text>
<rect x="2003" y="1297.7" width="15" height="21" fill="#555555" rx="5" />
<rect x="2003" y="1307.9" width="15" height="0.6" fill="#4a4a4a" />
<path d="M2007.3 1305.0 L2010.5 1302.0 L2013.7 1305.0 M2007.3 1311.4 L2010.5 1314.4 L2013.7 1311.4" fill="none" stroke="#e2e2e2" stroke-width="1.6" stroke-linecap="round" stroke-linejoin="round" />
<rect x="1811" y="1326.7" width="206.7" height="10" fill="#5c5c5c" rx="5" />
</svg></body></html>
